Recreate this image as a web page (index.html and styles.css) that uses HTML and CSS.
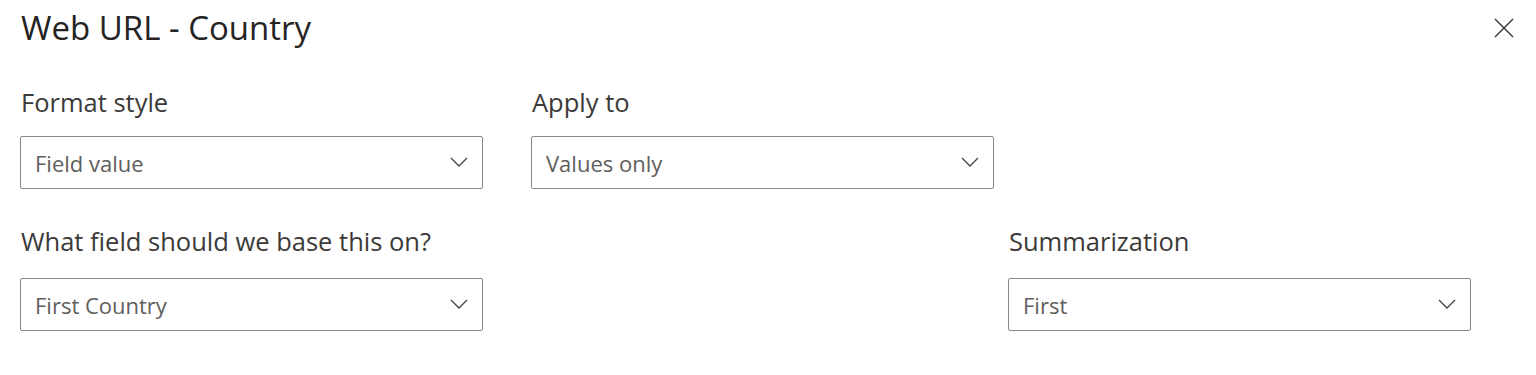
FILE: index.html
```html
<!DOCTYPE html>
<html lang="en">
<head>
    <meta charset="UTF-8">
    <meta name="viewport" content="width=device-width, initial-scale=1.0">
    <title>Web URL - Country</title>
    <link rel="stylesheet" href="styles.css">
</head>
<body>
    <div class="panel">
        <div class="header">
            <h2 class="title">Web URL - Country</h2>
            <button class="close" aria-label="Close">
                <svg width="20" height="20" viewBox="0 0 20 20"><path d="M1 1 L19 19 M19 1 L1 19" stroke="#333" stroke-width="1.4" fill="none"/></svg>
            </button>
        </div>

        <div class="row first-row">
            <div class="field">
                <label>Format style</label>
                <div class="select">
                    <span>Field value</span>
                    <svg class="chev" width="18" height="10" viewBox="0 0 18 10"><path d="M1 1 L9 9 L17 1" stroke="#444" stroke-width="1.3" fill="none"/></svg>
                </div>
            </div>
            <div class="field">
                <label>Apply to</label>
                <div class="select">
                    <span>Values only</span>
                    <svg class="chev" width="18" height="10" viewBox="0 0 18 10"><path d="M1 1 L9 9 L17 1" stroke="#444" stroke-width="1.3" fill="none"/></svg>
                </div>
            </div>
        </div>

        <div class="row second-row">
            <div class="field">
                <label>What field should we base this on?</label>
                <div class="select">
                    <span>First Country</span>
                    <svg class="chev" width="18" height="10" viewBox="0 0 18 10"><path d="M1 1 L9 9 L17 1" stroke="#444" stroke-width="1.3" fill="none"/></svg>
                </div>
            </div>
            <div class="field">
                <label>Summarization</label>
                <div class="select">
                    <span>First</span>
                    <svg class="chev" width="18" height="10" viewBox="0 0 18 10"><path d="M1 1 L9 9 L17 1" stroke="#444" stroke-width="1.3" fill="none"/></svg>
                </div>
            </div>
        </div>
    </div>
</body>
</html>
```

FILE: styles.css
```css
body{
    margin: 0;
    background: white;
    font-family: "Open Sans", "Noto Sans", sans-serif;
    color: #252423;
}
.panel{
    padding: 6px 20px 0 20px;
}
.header{
    display: flex;
    justify-content: space-between;
    align-items: center;
    height: 44px;
}
.title{
    margin: 0 0 0 1px;
    font-size: 33px;
    font-weight: 400;
    line-height: 44px;
    color: #252423;
}
.close{
    background: none;
    border: none;
    padding: 0;
    margin-right: 2px;
    margin-top: 2px;
    cursor: pointer;
}
.row{
    display: flex;
}
.first-row{
    gap: 48px;
    margin-top: 35px;
}
.second-row{
    justify-content: space-between;
    width: 1451px;
    margin-top: 35px;
}
.field label{
    display: block;
    font-size: 25.5px;
    line-height: 34px;
    color: #3b3a39;
    margin-left: 1px;
}
.select{
    box-sizing: border-box;
    width: 463px;
    height: 53px;
    margin-top: 17px;
    border: 1px solid #8a8886;
    border-radius: 2px;
    display: flex;
    align-items: center;
    justify-content: space-between;
    padding: 0 14px 0 14px;
    font-size: 22px;
    color: #605e5c;
}
.second-row .select{
    margin-top: 20px;
}
.chev{
    margin-top: -2px;
}
```
